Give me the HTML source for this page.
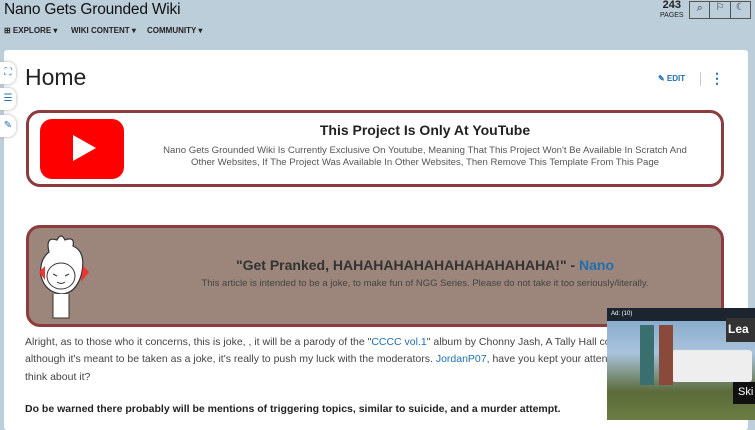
<!DOCTYPE html>
<html><head><style>
*{margin:0;padding:0;box-sizing:border-box}
body{width:755px;height:420px;overflow:hidden;background:#bdcedb;font-family:"Liberation Sans",sans-serif;position:relative;color:#333}
.abs{position:absolute}
.title{left:4px;top:1px;font-size:15.5px;color:#111;letter-spacing:-0.2px}
.nav{top:26px;font-size:8px;font-weight:bold;color:#222}
.panel{left:4px;top:50px;width:744px;height:380px;background:#fff;border-radius:3px}
.box{border:3px solid #8c3b3e;border-radius:14px;left:26px;width:698px}
.p{font-size:10.5px;color:#444;left:25px}
a{color:#1f6fb0;text-decoration:none}
.sb{width:16px;height:22px;background:#fff;border-radius:0 8px 8px 0;left:0;box-shadow:0 0 3px #aaa;color:#2a6fad;font-size:10px;text-align:center;line-height:22px}
</style></head><body>
<div class="abs title">Nano Gets Grounded Wiki</div>
<div class="abs" style="left:660px;top:1px;font-size:11px;font-weight:bold;text-align:center;line-height:9px;color:#222">243<br><span style="font-size:7px;font-weight:normal">PAGES</span></div>
<div class="abs" style="left:689px;top:1px;width:62px;height:18px;border:1px solid #555;display:flex">
<div style="flex:1;border-right:1px solid #555;font-size:11px;text-align:center">⌕</div><div style="flex:1;border-right:1px solid #555;font-size:10px;text-align:center">⚐</div><div style="flex:1;font-size:10px;text-align:center">☾</div></div>
<div class="abs nav" style="left:4px">⊞ EXPLORE ▾</div>
<div class="abs nav" style="left:71px">WIKI CONTENT ▾</div>
<div class="abs nav" style="left:147px">COMMUNITY ▾</div>
<div class="abs panel"></div>
<div class="abs sb" style="top:62px">⛶</div>
<div class="abs sb" style="top:88px">☰</div>
<div class="abs sb" style="top:115px">✎</div>
<div class="abs" style="left:25px;top:64px;font-size:23px;color:#222;font-weight:300">Home</div>
<div class="abs" style="left:658px;top:74px;font-size:8px;font-weight:bold;color:#1f6fb0">✎ EDIT</div>
<div class="abs" style="left:700px;top:72px;width:1px;height:14px;background:#ccc"></div>
<div class="abs" style="left:710px;top:70px;font-size:14px;font-weight:bold;color:#1f6fb0">⋮</div>
<div class="abs box" style="top:110px;height:77px;background:#fff"></div>
<div class="abs" style="left:40px;top:119px;width:84px;height:60px;background:#f00;border-radius:12px"></div>
<div class="abs" style="left:73px;top:135px;width:0;height:0;border-left:23px solid #fff;border-top:13px solid transparent;border-bottom:13px solid transparent"></div>
<div class="abs" style="left:130px;top:122px;width:590px;text-align:center;font-size:14px;font-weight:bold;color:#222">This Project Is Only At YouTube</div>
<div class="abs" style="left:130px;top:145px;width:590px;text-align:center;font-size:9.6px;color:#555;line-height:12px">Nano Gets Grounded Wiki Is Currently Exclusive On Youtube, Meaning That This Project Won't Be Available In Scratch And<br>Other Websites, If The Project Was Available In Other Websites, Then Remove This Template From This Page</div>
<div class="abs box" style="top:225px;height:102px;background:#9c857a"></div>
<svg class="abs" style="left:35px;top:232px" width="55" height="92" viewBox="0 0 55 92"><path d="M14 20 Q10 4 22 8 Q26 0 30 8 Q40 4 38 14 Q52 20 46 44 Q40 62 26 62 Q10 60 6 44 Q4 28 14 20Z" fill="#fff" stroke="#333" stroke-width="1.2"/><ellipse cx="26" cy="44" rx="14" ry="13" fill="#fff" stroke="#333"/><path d="M4 40 L10 34 L10 48Z" fill="#e33"/><path d="M48 34 L54 40 L46 50Z" fill="#e33"/><path d="M18 42 l4 2 M34 42 l-4 2 M22 50 q4 3 8 0" stroke="#333" fill="none"/><path d="M18 62 L18 86 L34 86 L34 62" fill="#fff" stroke="#333"/></svg>
<div class="abs" style="left:110px;top:257px;width:630px;text-align:center;font-size:14px;font-weight:bold;color:#333">"Get Pranked, HAHAHAHAHAHAHAHAHAHAHA!" - <a>Nano</a></div>
<div class="abs" style="left:110px;top:278px;width:630px;text-align:center;font-size:9.5px;color:#444">This article is intended to be a joke, to make fun of NGG Series. Please do not take it too seriously/literally.</div>
<div class="abs p" style="top:336px">Alright, as to those who it concerns, this is joke, , it will be a parody of the "<a>CCCC vol.1</a>" album by Chonny Jash, A Tally Hall cover album</div>
<div class="abs p" style="top:353px">although it's meant to be taken as a joke, it's really to push my luck with the moderators. <a>JordanP07</a>, have you kept your attention to</div>
<div class="abs p" style="top:371px">think about it?</div>
<div class="abs p" style="top:403px;font-weight:bold;color:#222">Do be warned there probably will be mentions of triggering topics, similar to suicide, and a murder attempt.</div>
<div class="abs" style="left:607px;top:308px;width:148px;height:112px;background:linear-gradient(#7da3c8 0%,#a9c3dc 40%,#5b6b3a 75%,#6b7d42 100%)"></div>
<div class="abs" style="left:607px;top:308px;width:148px;height:13px;background:#1c2430;color:#fff;font-size:6px;padding:3px 4px">Ad: (10)</div>
<div class="abs" style="left:672px;top:350px;width:80px;height:32px;background:#eee;border-radius:3px"></div>
<div class="abs" style="left:640px;top:325px;width:14px;height:60px;background:#3a6f6f"></div>
<div class="abs" style="left:659px;top:325px;width:14px;height:60px;background:#8a4a3a"></div>
<div class="abs" style="left:726px;top:318px;width:29px;height:24px;background:#333;color:#fff;font-size:12px;padding:4px 2px;font-weight:bold">Lea</div>
<div class="abs" style="left:733px;top:382px;width:22px;height:22px;background:#111;color:#fff;font-size:11px;padding:4px 5px">Ski</div>
</body></html>
